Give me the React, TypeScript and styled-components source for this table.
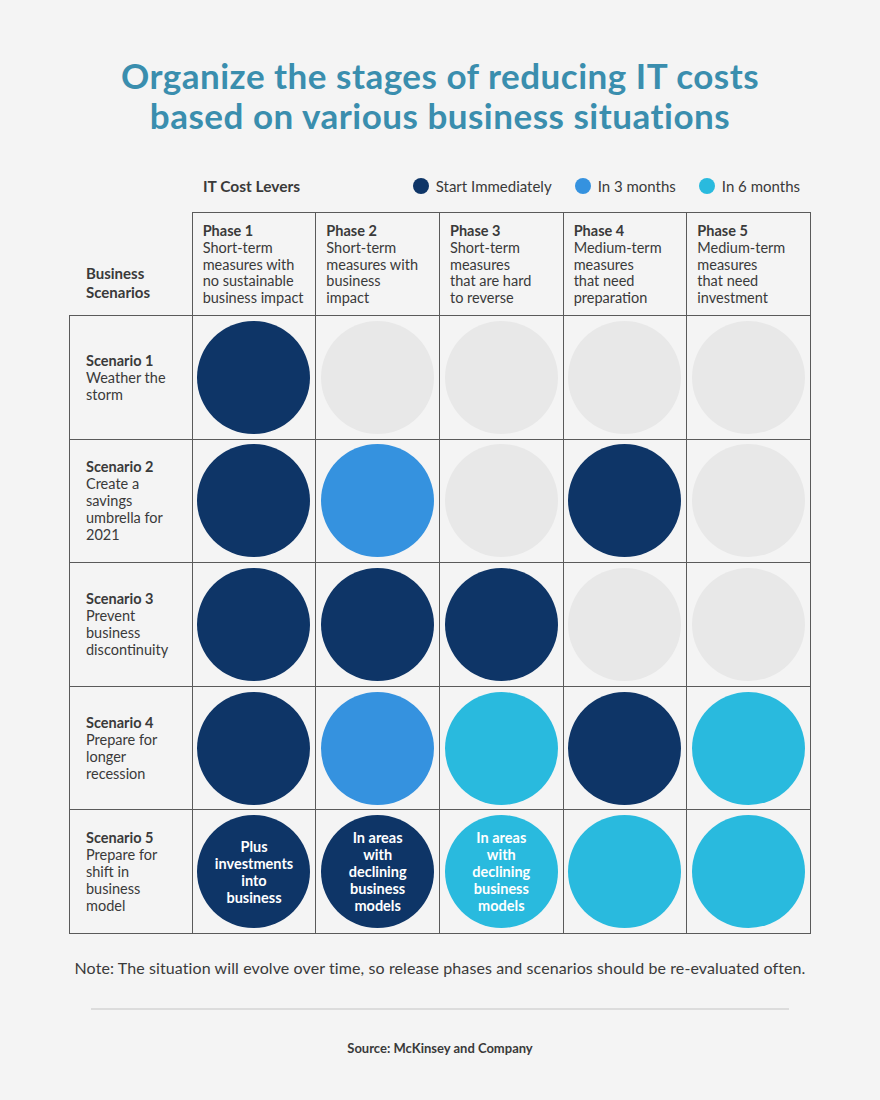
import { FC } from 'react';
import styled, { createGlobalStyle } from 'styled-components';

type Level = 'now' | 'three' | 'six' | 'none';

type Cell = { level: Level; text?: string[] };

type Scenario = { title: string; lines: string[]; cells: Cell[] };

const colors: Record<Level, string> = {
  now: '#0e3567',
  three: '#3592df',
  six: '#29bade',
  none: '#e8e8e8',
};

const phases = [
  { title: 'Phase 1', lines: ['Short-term', 'measures with', 'no sustainable', 'business impact'] },
  { title: 'Phase 2', lines: ['Short-term', 'measures with', 'business', 'impact'] },
  { title: 'Phase 3', lines: ['Short-term', 'measures', 'that are hard', 'to reverse'] },
  { title: 'Phase 4', lines: ['Medium-term', 'measures', 'that need', 'preparation'] },
  { title: 'Phase 5', lines: ['Medium-term', 'measures', 'that need', 'investment'] },
];

const declining = ['In areas', 'with', 'declining', 'business', 'models'];

const scenarios: Scenario[] = [
  {
    title: 'Scenario 1',
    lines: ['Weather the', 'storm'],
    cells: [{ level: 'now' }, { level: 'none' }, { level: 'none' }, { level: 'none' }, { level: 'none' }],
  },
  {
    title: 'Scenario 2',
    lines: ['Create a', 'savings', 'umbrella for', '2021'],
    cells: [{ level: 'now' }, { level: 'three' }, { level: 'none' }, { level: 'now' }, { level: 'none' }],
  },
  {
    title: 'Scenario 3',
    lines: ['Prevent', 'business', 'discontinuity'],
    cells: [{ level: 'now' }, { level: 'now' }, { level: 'now' }, { level: 'none' }, { level: 'none' }],
  },
  {
    title: 'Scenario 4',
    lines: ['Prepare for', 'longer', 'recession'],
    cells: [{ level: 'now' }, { level: 'three' }, { level: 'six' }, { level: 'now' }, { level: 'six' }],
  },
  {
    title: 'Scenario 5',
    lines: ['Prepare for', 'shift in', 'business', 'model'],
    cells: [
      { level: 'now', text: ['Plus', 'investments', 'into', 'business'] },
      { level: 'now', text: declining },
      { level: 'six', text: declining },
      { level: 'six' },
      { level: 'six' },
    ],
  },
];

const legend: { level: Level; label: string }[] = [
  { level: 'now', label: 'Start Immediately' },
  { level: 'three', label: 'In 3 months' },
  { level: 'six', label: 'In 6 months' },
];

const Lines: FC<{ lines: string[] }> = ({ lines }) => (
  <>
    {lines.map((l, i) => (
      <span key={i}>
        {l}
        {i < lines.length - 1 && <br />}
      </span>
    ))}
  </>
);

const App: FC = () => (
  <Page>
    <GlobalStyle />
    <Title>
      Organize the stages of reducing IT costs
      <br />
      based on various business situations
    </Title>

    <Chart>
      <LegendRow>
        <LeversLabel>IT Cost Levers</LeversLabel>
        <LegendList>
          {legend.map((item) => (
            <LegendItem key={item.label}>
              <Dot $level={item.level} />
              {item.label}
            </LegendItem>
          ))}
        </LegendList>
      </LegendRow>

      <Grid>
        <CornerCell>
          <strong>Business</strong>
          <strong>Scenarios</strong>
        </CornerCell>
        {phases.map((p) => (
          <PhaseCell key={p.title}>
            <strong>{p.title}</strong>
            <br />
            <Lines lines={p.lines} />
          </PhaseCell>
        ))}

        {scenarios.map((s) => (
          <Row key={s.title}>
            <ScenarioCell>
              <div>
                <strong>{s.title}</strong>
                <br />
                <Lines lines={s.lines} />
              </div>
            </ScenarioCell>
            {s.cells.map((c, i) => (
              <BodyCell key={i}>
                <Circle $level={c.level}>
                  {c.text && (
                    <div>
                      <Lines lines={c.text} />
                    </div>
                  )}
                </Circle>
              </BodyCell>
            ))}
          </Row>
        ))}
      </Grid>
    </Chart>

    <Note>
      Note: The situation will evolve over time, so release phases and scenarios should be
      re-evaluated often.
    </Note>
    <Divider />
    <Source>Source: McKinsey and Company</Source>
  </Page>
);

const GlobalStyle = createGlobalStyle`
  html, body {
    margin: 0;
    padding: 0;
    background: #f4f4f4;
  }
  body {
    font-family: Lato, 'Open Sans', sans-serif;
    color: #3a3a3a;
  }
`;

const Page = styled.div`
  width: 880px;
  min-height: 1100px;
  display: flex;
  flex-direction: column;
  align-items: center;
  padding-top: 55px;
  box-sizing: border-box;
`;

const Title = styled.h1`
  margin: 0;
  font-size: 35px;
  line-height: 40px;
  font-weight: 700;
  color: #3a8eae;
  text-align: center;
  letter-spacing: 0.5px;
`;

const Chart = styled.div`
  width: 742px;
  margin-top: 36px;
`;

const LegendRow = styled.div`
  display: flex;
  align-items: center;
  justify-content: space-between;
  height: 30px;
  padding: 0 11px 0 134px;
  margin-bottom: 11px;
`;

const LeversLabel = styled.div`
  font-size: 15.5px;
  font-weight: 700;
  color: #3a3a3a;
`;

const LegendList = styled.div`
  display: flex;
  gap: 23px;
`;

const LegendItem = styled.div`
  display: flex;
  align-items: center;
  gap: 7px;
  font-size: 15px;
  color: #3a3a3a;
`;

const Dot = styled.span<{ $level: Level }>`
  width: 16px;
  height: 16px;
  border-radius: 50%;
  background: ${({ $level }) => colors[$level]};
`;

const Grid = styled.div`
  display: grid;
  grid-template-columns: repeat(6, 1fr);
  font-size: 14.5px;
  line-height: 17px;
  color: #3a3a3a;

  strong {
    font-weight: 700;
  }
`;

const Row = styled.div`
  display: contents;
`;

const lineColor = '#5a5a5a';

const CornerCell = styled.div`
  border-right: 1px solid ${lineColor};
  border-bottom: 1px solid ${lineColor};
  padding: 0 0 13px 17px;
  display: flex;
  flex-direction: column;
  justify-content: flex-end;
  font-size: 15px;
  line-height: 19px;
`;

const PhaseCell = styled.div`
  border-top: 1px solid ${lineColor};
  border-right: 1px solid ${lineColor};
  border-bottom: 1px solid ${lineColor};
  padding: 10px 0 8px 10px;
  white-space: nowrap;
  line-height: 16.8px;
`;

const ScenarioCell = styled.div`
  height: 122.6px;
  border-left: 1px solid ${lineColor};
  border-right: 1px solid ${lineColor};
  border-bottom: 1px solid ${lineColor};
  padding-left: 16px;
  display: flex;
  align-items: center;
  white-space: nowrap;
`;

const BodyCell = styled.div`
  height: 122.6px;
  border-right: 1px solid ${lineColor};
  border-bottom: 1px solid ${lineColor};
  display: flex;
  align-items: center;
  justify-content: center;
`;

const Circle = styled.div<{ $level: Level }>`
  width: 113px;
  height: 113px;
  border-radius: 50%;
  background: ${({ $level }) => colors[$level]};
  display: flex;
  align-items: center;
  justify-content: center;
  text-align: center;
  color: #ffffff;
  font-weight: 700;
  font-size: 14.5px;
  line-height: 17px;
`;

const Note = styled.p`
  margin: 24px 0 0;
  font-size: 16px;
  letter-spacing: 0.1px;
  color: #3a3a3a;
  text-align: center;
`;

const Divider = styled.hr`
  width: 698px;
  margin: 31px 0 0;
  border: 0;
  border-top: 2px solid #dcdcdc;
`;

const Source = styled.div`
  margin-top: 30px;
  font-size: 13px;
  font-weight: 700;
  color: #3a3a3a;
`;

export default App;
